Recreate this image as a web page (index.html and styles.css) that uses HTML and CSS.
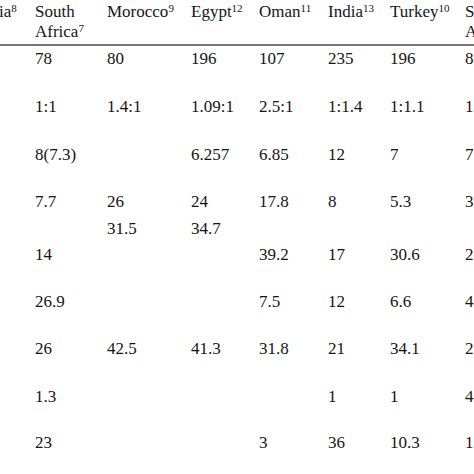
FILE: index.html
```html
<!DOCTYPE html>
<html>
<head>
<meta charset="utf-8">
<link rel="stylesheet" href="styles.css">
</head>
<body>
<div class="table">
  <div class="row head">
    <div class="c0">ia<sup>8</sup></div>
    <div>South Africa<sup>7</sup></div>
    <div>Morocco<sup>9</sup></div>
    <div>Egypt<sup>12</sup></div>
    <div>Oman<sup>11</sup></div>
    <div>India<sup>13</sup></div>
    <div>Turkey<sup>10</sup></div>
    <div>Saudi Arabia</div>
  </div>
  <div class="row r48"><div></div><div>78</div><div>80</div><div>196</div><div>107</div><div>235</div><div>196</div><div>8</div></div>
  <div class="row r48"><div></div><div>1:1</div><div>1.4:1</div><div>1.09:1</div><div>2.5:1</div><div>1:1.4</div><div>1:1.1</div><div>1</div></div>
  <div class="row r47"><div></div><div>8(7.3)</div><div></div><div>6.257</div><div>6.85</div><div>12</div><div>7</div><div>7</div></div>
  <div class="row r27"><div></div><div>7.7</div><div>26</div><div>24</div><div>17.8</div><div>8</div><div>5.3</div><div>3</div></div>
  <div class="row r26"><div></div><div></div><div>31.5</div><div>34.7</div><div></div><div></div><div></div><div></div></div>
  <div class="row r47"><div></div><div>14</div><div></div><div></div><div>39.2</div><div>17</div><div>30.6</div><div>2</div></div>
  <div class="row r47"><div></div><div>26.9</div><div></div><div></div><div>7.5</div><div>12</div><div>6.6</div><div>4</div></div>
  <div class="row r48"><div></div><div>26</div><div>42.5</div><div>41.3</div><div>31.8</div><div>21</div><div>34.1</div><div>2</div></div>
  <div class="row r46"><div></div><div>1.3</div><div></div><div></div><div></div><div>1</div><div>1</div><div>4</div></div>
  <div class="row r46"><div></div><div>23</div><div></div><div></div><div>3</div><div>36</div><div>10.3</div><div>1</div></div>
</div>
</body>
</html>
```
FILE: styles.css
```css
html, body {
  margin: 0;
  padding: 0;
  background: #ffffff;
}
body {
  width: 474px;
  height: 474px;
  overflow: hidden;
  font-family: "Liberation Serif", "Times New Roman", serif;
  font-size: 17px;
  line-height: 20px;
  color: #151515;
}
.table {
  width: 540px;
}
.row {
  display: grid;
  grid-template-columns: 35px 72px 84px 68px 69px 62px 75px 75px;
  box-sizing: border-box;
  padding-top: 3px;
}
.row > div {
  white-space: nowrap;
}
.head > div {
  white-space: normal;
}
.head {
  padding-top: 2px;
  height: 46px;
  border-bottom: 2px solid #767676;
}
.head .c0 {
  margin-left: -1px;
}
.r48 { height: 48px; }
.r47 { height: 47px; }
.r46 { height: 46px; }
.r27 { height: 27px; }
.r26 { height: 26px; }
sup {
  font-size: 11px;
  line-height: 0;
  vertical-align: 5px;
}
```
